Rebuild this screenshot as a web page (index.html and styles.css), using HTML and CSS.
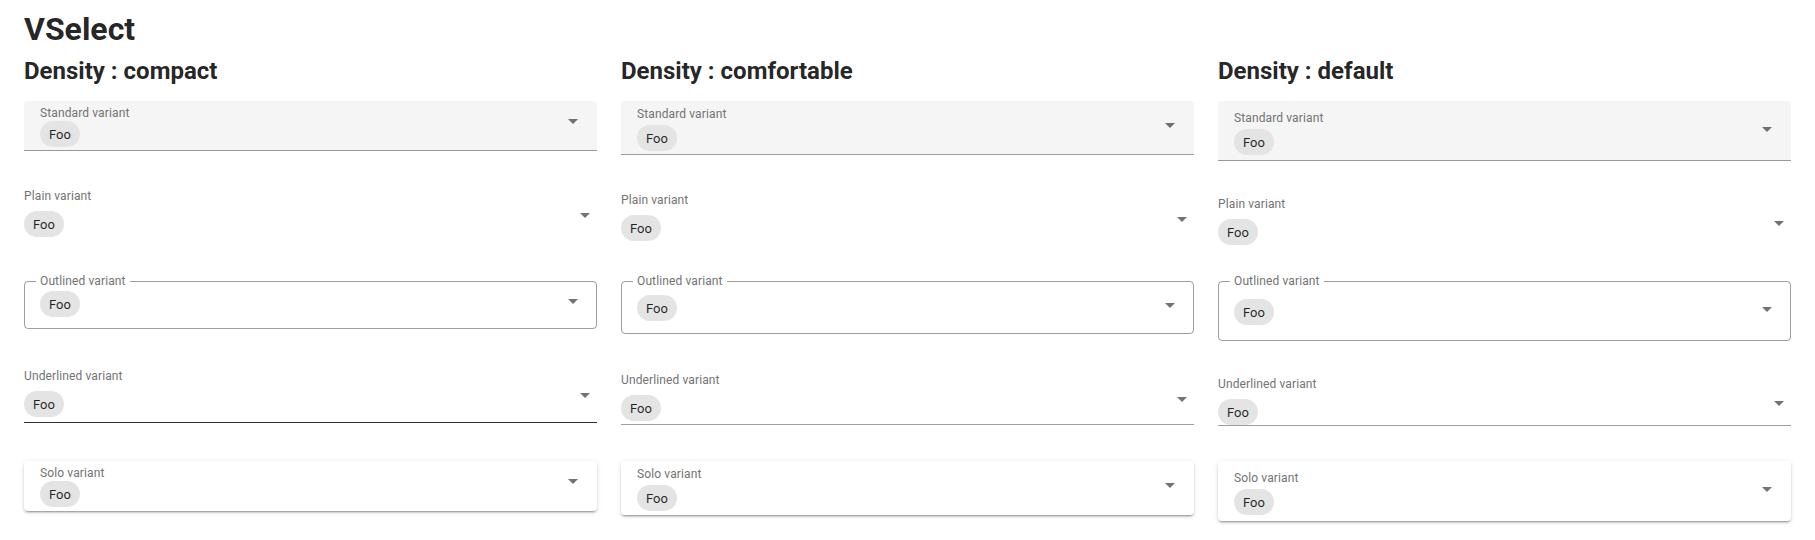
FILE: index.html
```html
<!DOCTYPE html>
<html lang="en">
<head>
  <meta charset="UTF-8">
  <title>VSelect</title>
  <link rel="stylesheet" href="styles.css">
</head>
<body>

<h1>VSelect</h1>

<div class="densities">

  <!-- compact -->
  <div class="density compact">
    <h2>Density : compact</h2>
    <div class="input">
      <div class="field filled">
        <div class="field-body"><span class="label">Standard variant</span><span class="chip">Foo</span></div>
        <svg class="arrow" viewBox="0 0 24 24"><path d="M7,10L12,15L17,10H7Z"/></svg>
      </div>
    </div>
    <div class="input">
      <div class="field plain">
        <div class="field-body"><span class="label">Plain variant</span><span class="chip">Foo</span></div>
        <svg class="arrow" viewBox="0 0 24 24"><path d="M7,10L12,15L17,10H7Z"/></svg>
      </div>
    </div>
    <div class="input">
      <div class="field outlined">
        <span class="label">Outlined variant</span>
        <div class="field-body"><span class="chip">Foo</span></div>
        <svg class="arrow" viewBox="0 0 24 24"><path d="M7,10L12,15L17,10H7Z"/></svg>
      </div>
    </div>
    <div class="input">
      <div class="field underlined hover">
        <div class="field-body"><span class="label">Underlined variant</span><span class="chip">Foo</span></div>
        <svg class="arrow" viewBox="0 0 24 24"><path d="M7,10L12,15L17,10H7Z"/></svg>
      </div>
    </div>
    <div class="input">
      <div class="field solo">
        <div class="field-body"><span class="label">Solo variant</span><span class="chip">Foo</span></div>
        <svg class="arrow" viewBox="0 0 24 24"><path d="M7,10L12,15L17,10H7Z"/></svg>
      </div>
    </div>
  </div>

  <!-- comfortable -->
  <div class="density comfortable">
    <h2>Density : comfortable</h2>
    <div class="input">
      <div class="field filled">
        <div class="field-body"><span class="label">Standard variant</span><span class="chip">Foo</span></div>
        <svg class="arrow" viewBox="0 0 24 24"><path d="M7,10L12,15L17,10H7Z"/></svg>
      </div>
    </div>
    <div class="input">
      <div class="field plain">
        <div class="field-body"><span class="label">Plain variant</span><span class="chip">Foo</span></div>
        <svg class="arrow" viewBox="0 0 24 24"><path d="M7,10L12,15L17,10H7Z"/></svg>
      </div>
    </div>
    <div class="input">
      <div class="field outlined">
        <span class="label">Outlined variant</span>
        <div class="field-body"><span class="chip">Foo</span></div>
        <svg class="arrow" viewBox="0 0 24 24"><path d="M7,10L12,15L17,10H7Z"/></svg>
      </div>
    </div>
    <div class="input">
      <div class="field underlined">
        <div class="field-body"><span class="label">Underlined variant</span><span class="chip">Foo</span></div>
        <svg class="arrow" viewBox="0 0 24 24"><path d="M7,10L12,15L17,10H7Z"/></svg>
      </div>
    </div>
    <div class="input">
      <div class="field solo">
        <div class="field-body"><span class="label">Solo variant</span><span class="chip">Foo</span></div>
        <svg class="arrow" viewBox="0 0 24 24"><path d="M7,10L12,15L17,10H7Z"/></svg>
      </div>
    </div>
  </div>

  <!-- default -->
  <div class="density default">
    <h2>Density : default</h2>
    <div class="input">
      <div class="field filled">
        <div class="field-body"><span class="label">Standard variant</span><span class="chip">Foo</span></div>
        <svg class="arrow" viewBox="0 0 24 24"><path d="M7,10L12,15L17,10H7Z"/></svg>
      </div>
    </div>
    <div class="input">
      <div class="field plain">
        <div class="field-body"><span class="label">Plain variant</span><span class="chip">Foo</span></div>
        <svg class="arrow" viewBox="0 0 24 24"><path d="M7,10L12,15L17,10H7Z"/></svg>
      </div>
    </div>
    <div class="input">
      <div class="field outlined">
        <span class="label">Outlined variant</span>
        <div class="field-body"><span class="chip">Foo</span></div>
        <svg class="arrow" viewBox="0 0 24 24"><path d="M7,10L12,15L17,10H7Z"/></svg>
      </div>
    </div>
    <div class="input">
      <div class="field underlined">
        <div class="field-body"><span class="label">Underlined variant</span><span class="chip">Foo</span></div>
        <svg class="arrow" viewBox="0 0 24 24"><path d="M7,10L12,15L17,10H7Z"/></svg>
      </div>
    </div>
    <div class="input">
      <div class="field solo">
        <div class="field-body"><span class="label">Solo variant</span><span class="chip">Foo</span></div>
        <svg class="arrow" viewBox="0 0 24 24"><path d="M7,10L12,15L17,10H7Z"/></svg>
      </div>
    </div>
  </div>

</div>

</body>
</html>
```

FILE: styles.css
```css
body { font-family: Roboto, "Noto Sans", Arial, sans-serif; margin: 0; padding: 0 24px; background: #fff; color: rgba(0, 0, 0, 0.87); }
h1 { font-size: 32px; line-height: 38px; font-weight: 700; margin: 10px 0 0; }
h2 { font-size: 24px; line-height: 32px; font-weight: 700; margin: 7px 0 14px; }
.densities { display: grid; grid-template-columns: repeat(3, 1fr); gap: 24px; }

/* per density offsets: chip top, filled label top, field heights */
.compact { --chip-top: 20px; --label-top: 5px; --box-h: 50px; --outline-h: 48px; --line-h: 52px; }
.comfortable { --chip-top: 24px; --label-top: 6px; --box-h: 54px; --outline-h: 53px; --line-h: 54px; }
.default { --chip-top: 28px; --label-top: 10px; --box-h: 60px; --outline-h: 60px; --line-h: 55px; }

.input { height: 90px; }
.field { display: flex; align-items: flex-start; box-sizing: border-box; }
.field-body { flex: 1; min-width: 0; }
.label { display: block; font-size: 12px; line-height: 14px; letter-spacing: 0.12px; color: #737373; white-space: nowrap; }
.chip { display: inline-flex; align-items: center; height: 26px; padding: 0 9px; border-radius: 13px; background: #e4e4e4; font-size: 13px; color: rgba(0, 0, 0, 0.85); }
.arrow { width: 24px; height: 24px; flex: none; fill: rgba(0, 0, 0, 0.55); }

/* standard + solo */
.filled, .solo { height: var(--box-h); padding: 0 12px 0 16px; }
.filled .field-body, .solo .field-body { padding-top: var(--label-top); }
.filled .chip, .solo .chip { margin-top: calc(var(--chip-top) - var(--label-top) - 14px); }
.filled .arrow, .solo .arrow { margin-top: calc(var(--chip-top) - 12px); }
.filled { background: #f5f5f5; border-radius: 4px 4px 0 0; border-bottom: 1px solid rgba(0, 0, 0, 0.38); }
.solo { background: #fff; border-radius: 4px; box-shadow: 0 3px 1px -2px rgba(0, 0, 0, 0.2), 0 2px 2px 0 rgba(0, 0, 0, 0.14), 0 1px 5px 0 rgba(0, 0, 0, 0.12); }

/* outlined */
.outlined { position: relative; height: var(--outline-h); padding: 0 11px 0 15px; border: 1px solid rgba(0, 0, 0, 0.38); border-radius: 4px; }
.outlined .label { position: absolute; top: -8px; left: 11px; padding: 0 4px; background: #fff; }
.outlined .field-body { padding-top: calc(var(--chip-top) - 11px); }
.outlined .arrow { margin-top: calc(var(--chip-top) - 13px); }

/* plain + underlined */
.plain .label, .underlined .label { margin-top: calc(var(--chip-top) - 22px); }
.plain .chip, .underlined .chip { margin-top: 8px; }
.plain .arrow, .underlined .arrow { margin-top: calc(var(--chip-top) - 8px); }
.underlined { height: var(--line-h); border-bottom: 1px solid rgba(0, 0, 0, 0.38); }
.underlined.hover { border-bottom-color: rgba(0, 0, 0, 0.8); }
```
